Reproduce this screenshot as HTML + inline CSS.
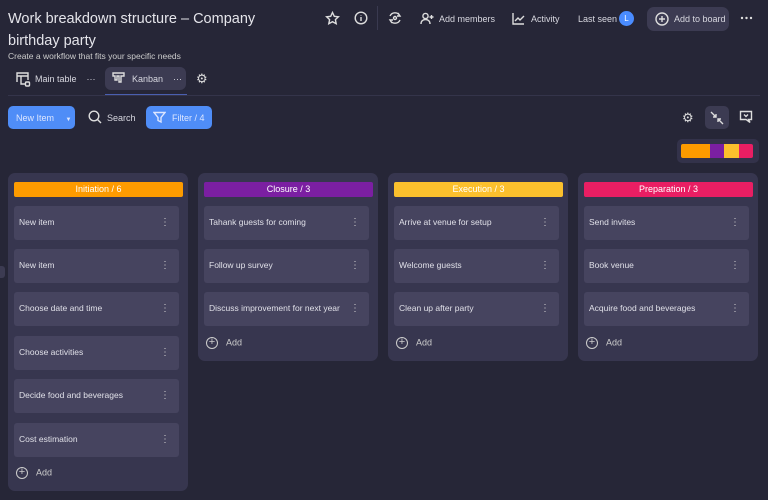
<!DOCTYPE html><html><head><style>
*{box-sizing:border-box;margin:0;padding:0}
body{width:768px;height:500px;background:#262637;font-family:"Liberation Sans",sans-serif;color:#ddd;position:relative;overflow:hidden}
.a{position:absolute}
.t{font-size:9px;color:#d8d8e0}
svg{position:absolute;fill:none;stroke:#ddd;stroke-width:1.4}
.col{position:absolute;top:173px;width:180px;background:#37364f;border-radius:7px}
.hd{position:absolute;left:6px;top:9px;width:169px;height:15px;border-radius:2px;font-size:9px;color:#fff;text-align:center;line-height:15px}
.card{position:absolute;left:6px;width:165px;height:34px;background:#46445f;border-radius:3px;font-size:8.5px;color:#e0e0e8;padding:11px 0 0 5px}
.card:after{content:"⋮";position:absolute;right:9px;top:11px;font-size:10px;color:#ccc}
.add{position:absolute;left:8px;font-size:9px;color:#ccc}
.add b{display:inline-block;width:12px;height:12px;border:1.3px solid #ccc;border-radius:50%;text-align:center;line-height:9px;font-weight:normal;margin-right:8px;vertical-align:middle;font-size:11px}
</style></head><body>
<div class="a" style="left:8px;top:8px;font-size:14.5px;color:#e4e4ea;line-height:22px;width:300px">Work breakdown structure – Company birthday party</div>
<div class="a" style="left:8px;top:51px;font-size:8.5px;color:#ccc">Create a workflow that fits your specific needs</div>
<svg style="left:325px;top:11px" width="15" height="15" viewBox="0 0 15 15"><path d="M7.5 1.5l1.8 3.8 4.1.5-3 2.8.8 4.1-3.7-2-3.7 2 .8-4.1-3-2.8 4.1-.5z"/></svg>
<svg style="left:354px;top:11px" width="14" height="14" viewBox="0 0 14 14"><circle cx="7" cy="7" r="5.8"/><path d="M7 6v4M7 4v.5"/></svg>
<div class="a" style="left:377px;top:6px;width:1px;height:24px;background:#3a3a50"></div>
<svg style="left:388px;top:11px" width="14" height="14" viewBox="0 0 14 14"><path d="M2 5a5.5 5.5 0 0 1 10 0M12 9a5.5 5.5 0 0 1-10 0M10 2l2 3-3 0M4 12l-2-3 3 0"/><circle cx="7" cy="7" r="1.5"/></svg>
<svg style="left:420px;top:12px" width="14" height="13" viewBox="0 0 14 13"><circle cx="5.5" cy="4" r="2.6"/><path d="M1 12c0-3 2-4.5 4.5-4.5S10 9 10 12M11.5 3v4M9.5 5h4"/></svg>
<div class="a t" style="left:439px;top:14px">Add members</div>
<svg style="left:512px;top:12px" width="13" height="13" viewBox="0 0 13 13"><path d="M1 1v11h11M3 9l3-3 2 2 4-4"/></svg>
<div class="a t" style="left:531px;top:14px">Activity</div>
<div class="a t" style="left:578px;top:14px">Last seen</div>
<div class="a" style="left:619px;top:11px;width:15px;height:15px;border-radius:50%;background:#4a8cff;color:#fff;font-size:8px;text-align:center;line-height:15px">L</div>
<div class="a" style="left:647px;top:7px;width:82px;height:24px;background:#3c3b52;border-radius:7px"></div>
<svg style="left:655px;top:12px" width="14" height="14" viewBox="0 0 14 14"><circle cx="7" cy="7" r="6"/><path d="M7 4v6M4 7h6"/></svg>
<div class="a t" style="left:674px;top:14px">Add to board</div>
<svg style="left:740px;top:16px" width="13" height="4" viewBox="0 0 13 4"><circle cx="2" cy="2" r="1.2" fill="#ddd" stroke="none"/><circle cx="6.5" cy="2" r="1.2" fill="#ddd" stroke="none"/><circle cx="11" cy="2" r="1.2" fill="#ddd" stroke="none"/></svg>
<svg style="left:16px;top:72px" width="15" height="15" viewBox="0 0 15 15"><path d="M1 10V1h11v7M1 4h11M5 4v8h4"/><rect x="9.5" y="10" width="4" height="4" rx="1"/></svg>
<div class="a t" style="left:35px;top:74px">Main table &nbsp;&nbsp;&nbsp;···</div>
<div class="a" style="left:105px;top:67px;width:81px;height:23px;background:#3c3b52;border-radius:6px"></div>
<svg style="left:112px;top:72px" width="13" height="12" viewBox="0 0 13 12"><path d="M1 1h11v3H9v6H7V4H5v4H3V4H1z"/></svg>
<div class="a t" style="left:132px;top:74px">Kanban &nbsp;&nbsp;&nbsp;···</div>
<div class="a" style="left:105px;top:94px;width:82px;height:2px;background:#4a5fb0"></div>
<div class="a" style="left:196px;top:71px;font-size:13px;color:#ddd">⚙</div>
<div class="a" style="left:8px;top:95px;width:752px;height:1px;background:#34344a"></div>
<div class="a" style="left:8px;top:106px;width:67px;height:23px;background:#4f8df7;border-radius:5px;color:#dde6ff;font-size:9px;padding:7px 0 0 8px">New Item <span style="margin-left:9px;font-size:6px">▼</span></div>
<svg style="left:88px;top:110px" width="14" height="14" viewBox="0 0 14 14"><circle cx="6" cy="6" r="4.8"/><path d="M9.5 9.5L13 13"/></svg>
<div class="a t" style="left:107px;top:113px">Search</div>
<div class="a" style="left:146px;top:106px;width:66px;height:23px;background:#4f8df7;border-radius:5px;color:#dde6ff;font-size:9px;padding:7px 0 0 26px">Filter / 4</div>
<svg style="left:153px;top:111px;stroke:#dde6ff" width="13" height="13" viewBox="0 0 13 13"><path d="M1 1.5h11L8 6.5v4.5l-3-1.5v-3z"/></svg>
<div class="a" style="left:682px;top:110px;font-size:13px;color:#ddd">⚙</div>
<div class="a" style="left:705px;top:106px;width:24px;height:23px;background:#3c3b52;border-radius:5px"></div>
<svg style="left:710px;top:111px" width="14" height="14" viewBox="0 0 14 14"><path d="M1 1l5 5M6 3v3H3M13 13L8 8M8 11V8h3"/></svg>
<svg style="left:739px;top:110px" width="14" height="14" viewBox="0 0 14 14"><path d="M1.5 1.5h11v8h-3l1.5 3-4-3h-5.5z"/><path d="M5 4.5l2 2 2-2"/></svg>
<div class="a" style="left:677px;top:139px;width:82px;height:24px;background:#33324a;border-radius:5px"></div>
<div class="a" style="left:681px;top:144px;width:29px;height:14px;background:#fd9b00;border-radius:2px 0 0 2px"></div>
<div class="a" style="left:710px;top:144px;width:14px;height:14px;background:#7b1fa2"></div>
<div class="a" style="left:724px;top:144px;width:15px;height:14px;background:#fbc02d"></div>
<div class="a" style="left:739px;top:144px;width:14px;height:14px;background:#e91e63;border-radius:0 2px 2px 0"></div>
<div class="a" style="left:0;top:266px;width:5px;height:12px;background:#3c3b52;border-radius:0 3px 3px 0"></div>

<div class="col" style="left:8px;height:318px">
<div class="hd" style="background:#fd9b00">Initiation / 6</div>
<div class="card" style="top:33px">New item</div>
<div class="card" style="top:76px">New item</div>
<div class="card" style="top:119px">Choose date and time</div>
<div class="card" style="top:163px">Choose activities</div>
<div class="card" style="top:206px">Decide food and beverages</div>
<div class="card" style="top:250px">Cost estimation</div>
<div class="add" style="top:294px"><b>+</b>Add</div>
</div>
<div class="col" style="left:198px;height:188px">
<div class="hd" style="background:#7b1fa2">Closure / 3</div>
<div class="card" style="top:33px">Tahank guests for coming</div>
<div class="card" style="top:76px">Follow up survey</div>
<div class="card" style="top:119px">Discuss improvement for next year</div>
<div class="add" style="top:164px"><b>+</b>Add</div>
</div>
<div class="col" style="left:388px;height:188px">
<div class="hd" style="background:#fbc02d">Execution / 3</div>
<div class="card" style="top:33px">Arrive at venue for setup</div>
<div class="card" style="top:76px">Welcome guests</div>
<div class="card" style="top:119px">Clean up after party</div>
<div class="add" style="top:164px"><b>+</b>Add</div>
</div>
<div class="col" style="left:578px;height:188px">
<div class="hd" style="background:#e91e63">Preparation / 3</div>
<div class="card" style="top:33px">Send invites</div>
<div class="card" style="top:76px">Book venue</div>
<div class="card" style="top:119px">Acquire food and beverages</div>
<div class="add" style="top:164px"><b>+</b>Add</div>
</div>
</body></html>
